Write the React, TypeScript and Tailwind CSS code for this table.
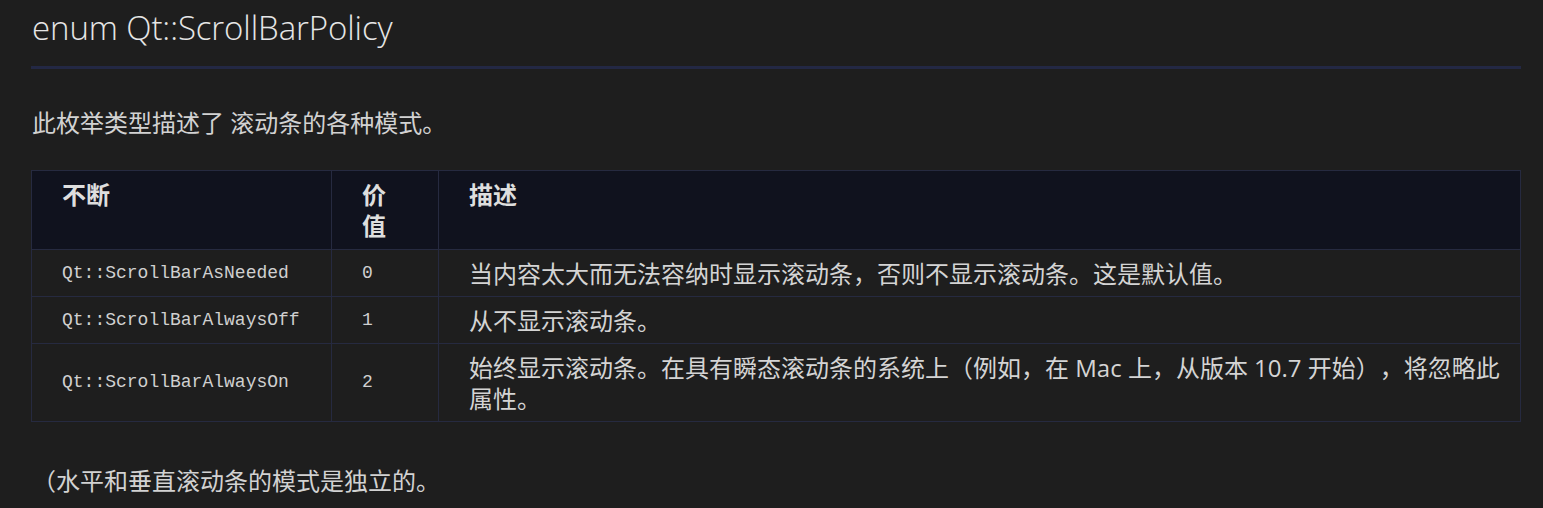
import React from "react";

const rows = [
  {
    name: "Qt::ScrollBarAsNeeded",
    value: "0",
    desc: "当内容太大而无法容纳时显示滚动条，否则不显示滚动条。这是默认值。",
  },
  { name: "Qt::ScrollBarAlwaysOff", value: "1", desc: "从不显示滚动条。" },
  {
    name: "Qt::ScrollBarAlwaysOn",
    value: "2",
    desc: "始终显示滚动条。在具有瞬态滚动条的系统上（例如，在 Mac 上，从版本 10.7 开始），将忽略此属性。",
  },
];

const sans = "font-['Open_Sans','Noto_Sans_CJK_SC',sans-serif]";

export default function App() {
  return (
    <div className={`min-h-screen bg-[#1e1e1e] pl-[31px] pr-[22px] pt-[8px] ${sans} [text-spacing-trim:space-all]`}>
      <h1 className="text-[33px] leading-[40px] font-light text-[#e6e6e6] pl-[1px] tracking-[-0.1px]">
        enum Qt::ScrollBarPolicy
      </h1>
      <div className="mt-[18px] h-[3px] bg-[#232844]" />
      <p className="mt-[39px] text-[24px] leading-[30px] text-[#d2d2d2] pl-[1px]">
        此枚举类型描述了 滚动条的各种模式。
      </p>
      <table className="mt-[32px] w-full border-collapse border border-[#262a40] text-left">
        <colgroup>
          <col className="w-[300px]" />
          <col className="w-[107px]" />
          <col />
        </colgroup>
        <thead>
          <tr className="bg-[#10121e] text-[#dedede]">
            <th className="border border-[#262a40] align-top pl-[30px] pr-[10px] pt-[8px] pb-[8px] text-[24px] leading-[31px] font-bold">
              不断
            </th>
            <th className="border border-[#262a40] align-top pl-[30px] pr-[29px] pt-[8px] pb-[8px] text-[24px] leading-[31px] font-bold">
              价值
            </th>
            <th className="border border-[#262a40] align-top pl-[30px] pr-[10px] pt-[8px] pb-[8px] text-[24px] leading-[31px] font-bold">
              描述
            </th>
          </tr>
        </thead>
        <tbody>
          {rows.map((r) => (
            <tr key={r.name} className="bg-[#1e1e1e]">
              <td className="border border-[#262a40] align-middle pl-[30px] pr-[10px] py-[7.5px] font-['Liberation_Mono',monospace] text-[18px] leading-[31px] text-[#d0d0d0]">
                {r.name}
              </td>
              <td className="border border-[#262a40] align-middle pl-[30px] pr-[10px] py-[7.5px] font-['Liberation_Mono',monospace] text-[18px] leading-[31px] text-[#d0d0d0]">
                {r.value}
              </td>
              <td className="border border-[#262a40] align-middle pl-[30px] pr-[4px] py-[7.5px] text-[24px] leading-[31px] text-[#d4d4d4]">
                {r.desc}
              </td>
            </tr>
          ))}
        </tbody>
      </table>
      <p className="mt-[44px] text-[24px] leading-[30px] text-[#d2d2d2] pl-[1px]">
        （水平和垂直滚动条的模式是独立的。
      </p>
    </div>
  );
}
